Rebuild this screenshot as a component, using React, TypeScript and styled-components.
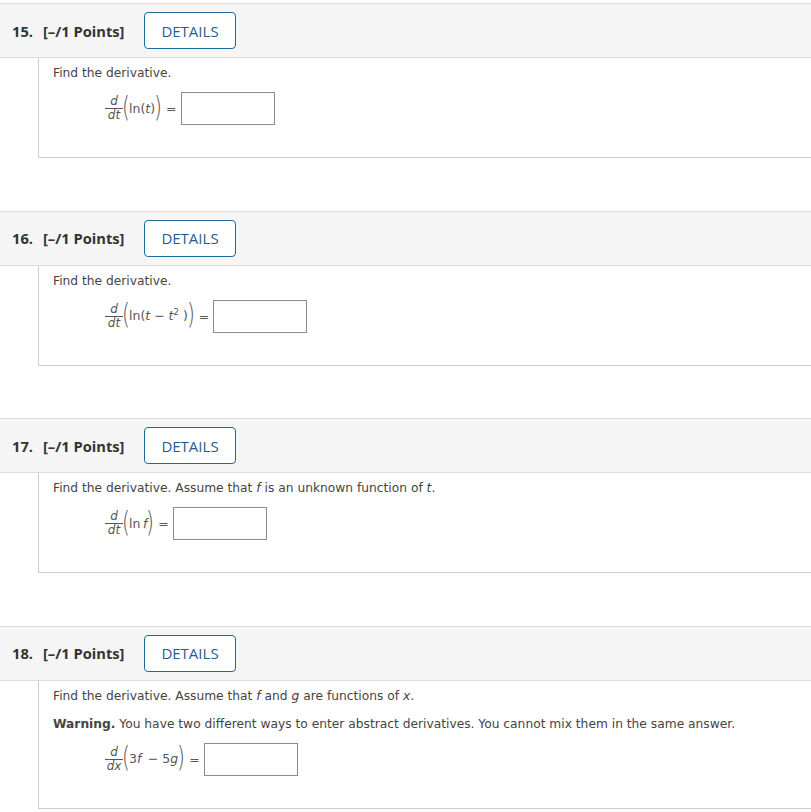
import React from "react";
import styled, { createGlobalStyle } from "styled-components";

const Global = createGlobalStyle`
  html, body { margin: 0; padding: 0; background: #fff; }
  body { font-family: "DejaVu Sans", Verdana, sans-serif; color: #444; }
`;

const Page = styled.div`
  padding-top: 3px;
  width: 811px;
  overflow: hidden;
`;

const Question = styled.section`
  margin-bottom: 52.67px;
`;

const Header = styled.div`
  display: flex;
  align-items: center;
  height: 37px;
  background: #f5f5f5;
  border-top: 1px solid #dcdcdc;
  border-bottom: 1px solid #dcdcdc;
  padding: 8px 0 8px 12px;
  font-family: "Open Sans", sans-serif;
`;

const Num = styled.span`
  font-weight: 700;
  font-size: 14.7px;
  color: #333;
  width: 31px;
`;

const Points = styled.span`
  font-weight: 700;
  font-size: 14.7px;
  color: #333;
  width: 101px;
`;

const DetailsButton = styled.button`
  box-sizing: border-box;
  width: 92px;
  height: 37px;
  border: 1px solid #1c6aa0;
  border-radius: 4px;
  background: #fff;
  color: #2a5c8b;
  font-family: "Open Sans", sans-serif;
  font-size: 15px;
  padding: 0;
`;

const Body = styled.div`
  margin-left: 38px;
  border-left: 1px solid #cccccc;
  border-bottom: 1px solid #cccccc;
  padding: 7px 14px 31px 14px;
  font-size: 12.25px;
  color: #444;
`;

const Para = styled.p`
  margin: 0;
  line-height: 16px;
  & + & {
    margin-top: 12px;
  }
`;

const Strong = styled.b`
  font-weight: 700;
`;

const I = styled.i`
  font-style: italic;
`;

const MathRow = styled.div`
  display: flex;
  align-items: center;
  margin: 10px 0 0 52px;
  height: 35px;
`;

const Frac = styled.span`
  display: inline-flex;
  flex-direction: column;
  align-items: center;
  font-style: italic;
  font-size: 12px;
  line-height: 11px;
  color: #555;
`;

const Bar = styled.span`
  display: block;
  width: 18px;
  height: 1px;
  background: #555;
  margin: 1px 0;
`;

const Paren = styled.span`
  font-family: "DejaVu Sans", sans-serif;
  font-weight: 200;
  font-size: 29px;
  line-height: 29px;
  color: #555;
  display: inline-flex;
  justify-content: center;
  width: 6px;
  transform: scaleX(0.7);
  margin-top: -3px;
`;

const Expr = styled.span`
  font-size: 12.5px;
  line-height: 20px;
  color: #555;
  display: inline-block;
  white-space: pre;
`;

const Sup = styled.sup`
  font-size: 8.5px;
  line-height: 0;
  vertical-align: 5px;
`;

const Eq = styled.span`
  font-size: 12.5px;
  color: #555;
  margin: 0 4px 0 5px;
`;

const Answer = styled.input`
  box-sizing: border-box;
  width: 94px;
  height: 33px;
  border: 1px solid #8c8c8c;
  margin: 0;
`;

type Q = {
  n: number;
  paras: React.ReactNode[];
  v: string;
  expr: React.ReactNode;
};

const questions: Q[] = [
  {
    n: 15,
    paras: ["Find the derivative."],
    v: "t",
    expr: (
      <>
        ln(<I>t</I>)
      </>
    ),
  },
  {
    n: 16,
    paras: ["Find the derivative."],
    v: "t",
    expr: (
      <>
        ln(<I>t</I>{" − "}<I>t</I>
        <Sup>2</Sup>{" "})
      </>
    ),
  },
  {
    n: 17,
    paras: [
      <>
        Find the derivative. Assume that <I>f</I> is an unknown function of <I>t</I>.
      </>,
    ],
    v: "t",
    expr: (
      <>
        ln{"\u2009"}<I>f</I>
      </>
    ),
  },
  {
    n: 18,
    paras: [
      <>
        Find the derivative. Assume that <I>f</I> and <I>g</I> are functions of <I>x</I>.
      </>,
      <>
        <Strong>Warning.</Strong> You have two different ways to enter abstract derivatives. You cannot mix them in the same answer.
      </>,
    ],
    v: "x",
    expr: (
      <>
        3<I>f</I>{" \u2009− "}5<I>g</I>
      </>
    ),
  },
];

export default function App() {
  return (
    <>
      <Global />
      <Page>
        {questions.map((q) => (
          <Question key={q.n}>
            <Header>
              <Num>{q.n}.</Num>
              <Points>[–/1 Points]</Points>
              <DetailsButton>DETAILS</DetailsButton>
            </Header>
            <Body>
              {q.paras.map((p, i) => (
                <Para key={i}>{p}</Para>
              ))}
              <MathRow>
                <Frac>
                  <span>d</span>
                  <Bar />
                  <span>d{q.v}</span>
                </Frac>
                <Paren>(</Paren>
                <Expr>{q.expr}</Expr>
                <Paren>)</Paren>
                <Eq>=</Eq>
                <Answer />
              </MathRow>
            </Body>
          </Question>
        ))}
      </Page>
    </>
  );
}
